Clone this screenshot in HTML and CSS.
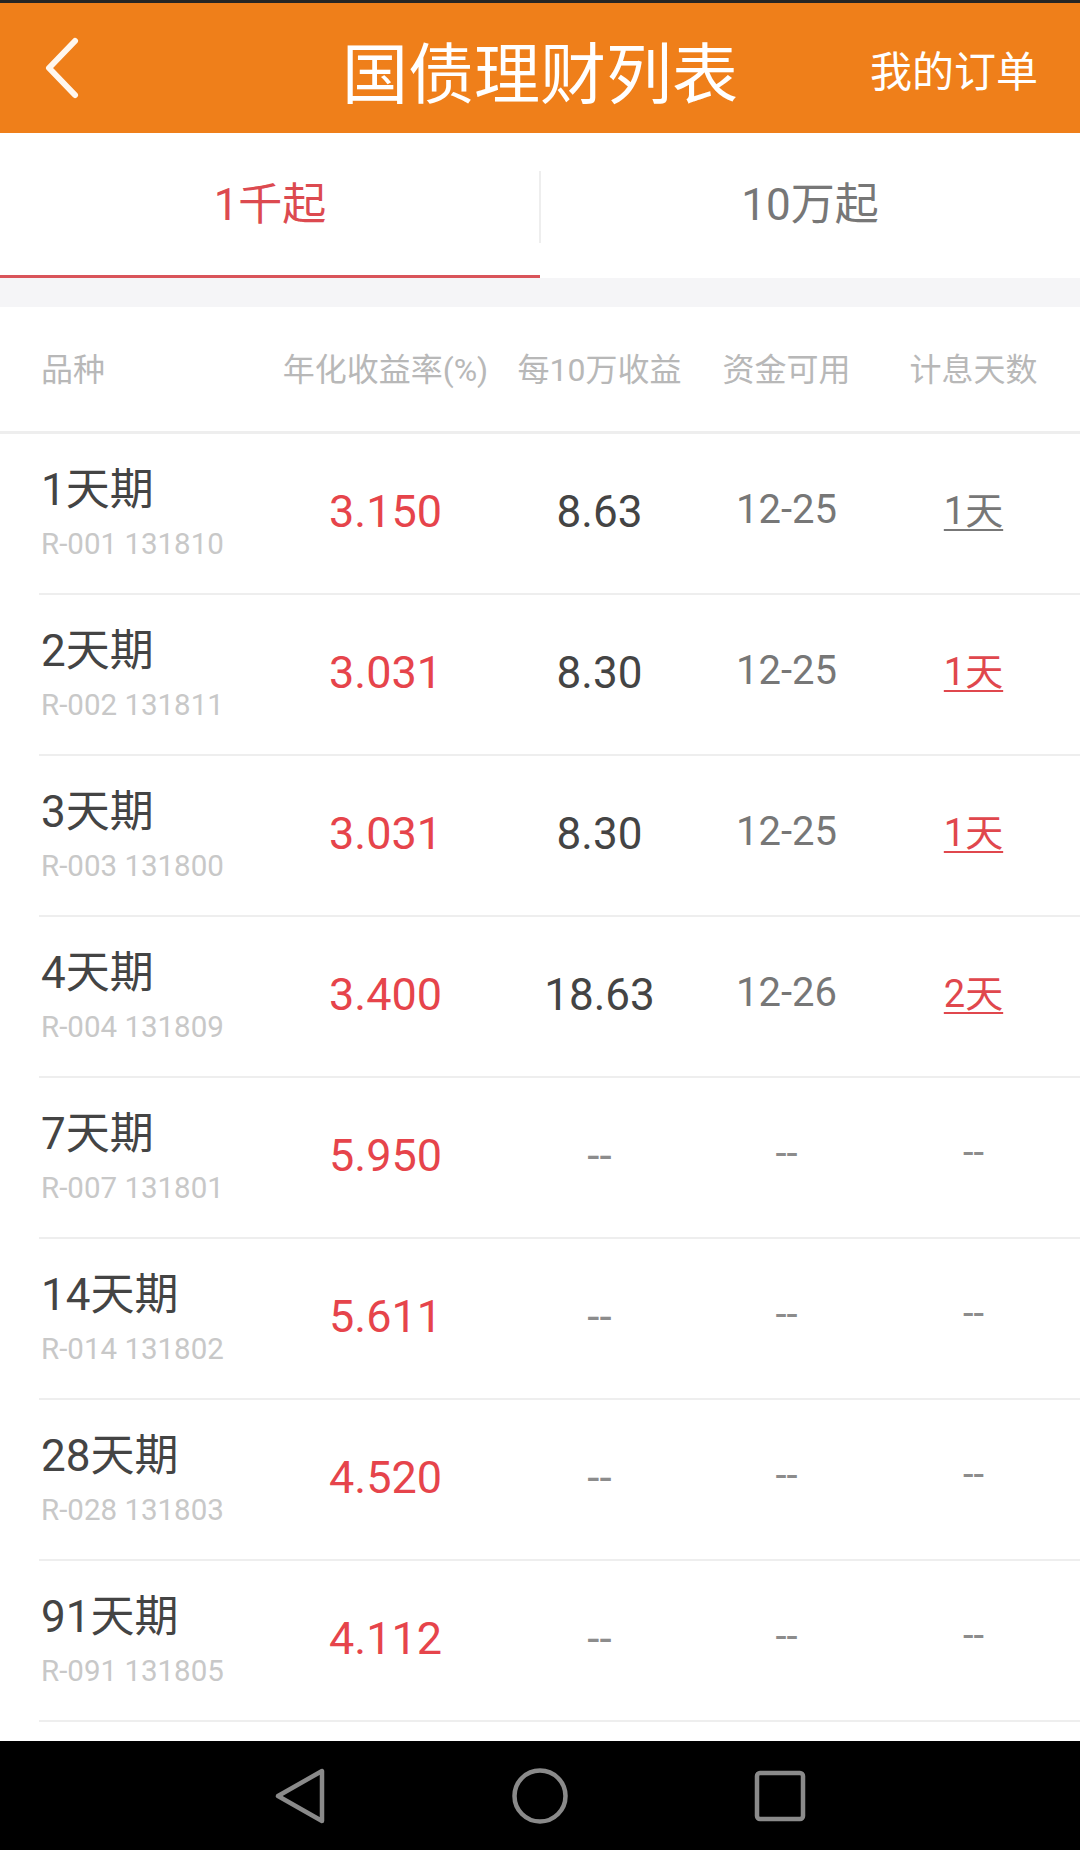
FILE: index.html
```html
<!DOCTYPE html>
<html>
<head>
  <meta charset="utf-8">
  <title>国债理财列表</title>
  <link rel="stylesheet" href="styles.css">
</head>
<body>
  <div class="screen">
    <div class="status-edge"></div>

    <div class="topbar">
      <div class="back">
        <svg width="40" height="64" viewBox="0 0 40 64">
          <polyline points="33,5 7,32 33,59" fill="none" stroke="#fff7ee" stroke-width="6" stroke-linecap="round" stroke-linejoin="round"/>
        </svg>
      </div>
      <div class="title">国债理财列表</div>
      <div class="orders">我的订单</div>
    </div>

    <div class="tabs">
      <div class="tab active">1千起</div>
      <div class="tab">10万起</div>
    </div>
    <div class="gap"></div>

    <div class="list">
      <div class="row head">
        <div class="cell name">品种</div>
        <div class="cell">年化收益率(%)</div>
        <div class="cell">每10万收益</div>
        <div class="cell">资金可用</div>
        <div class="cell">计息天数</div>
      </div>

      <div class="row">
        <div class="cell name"><div class="term">1天期</div><div class="code">R-001 131810</div></div>
        <div class="cell rate">3.150</div>
        <div class="cell income">8.63</div>
        <div class="cell date">12-25</div>
        <div class="cell days"><span class="link gray">1天</span></div>
      </div>
      <div class="row">
        <div class="cell name"><div class="term">2天期</div><div class="code">R-002 131811</div></div>
        <div class="cell rate">3.031</div>
        <div class="cell income">8.30</div>
        <div class="cell date">12-25</div>
        <div class="cell days"><span class="link">1天</span></div>
      </div>
      <div class="row">
        <div class="cell name"><div class="term">3天期</div><div class="code">R-003 131800</div></div>
        <div class="cell rate">3.031</div>
        <div class="cell income">8.30</div>
        <div class="cell date">12-25</div>
        <div class="cell days"><span class="link">1天</span></div>
      </div>
      <div class="row">
        <div class="cell name"><div class="term">4天期</div><div class="code">R-004 131809</div></div>
        <div class="cell rate">3.400</div>
        <div class="cell income">18.63</div>
        <div class="cell date">12-26</div>
        <div class="cell days"><span class="link">2天</span></div>
      </div>
      <div class="row">
        <div class="cell name"><div class="term">7天期</div><div class="code">R-007 131801</div></div>
        <div class="cell rate">5.950</div>
        <div class="cell income empty">--</div>
        <div class="cell date empty">--</div>
        <div class="cell days empty">--</div>
      </div>
      <div class="row">
        <div class="cell name"><div class="term">14天期</div><div class="code">R-014 131802</div></div>
        <div class="cell rate">5.611</div>
        <div class="cell income empty">--</div>
        <div class="cell date empty">--</div>
        <div class="cell days empty">--</div>
      </div>
      <div class="row">
        <div class="cell name"><div class="term">28天期</div><div class="code">R-028 131803</div></div>
        <div class="cell rate">4.520</div>
        <div class="cell income empty">--</div>
        <div class="cell date empty">--</div>
        <div class="cell days empty">--</div>
      </div>
      <div class="row">
        <div class="cell name"><div class="term">91天期</div><div class="code">R-091 131805</div></div>
        <div class="cell rate">4.112</div>
        <div class="cell income empty">--</div>
        <div class="cell date empty">--</div>
        <div class="cell days empty">--</div>
      </div>
    </div>

    <div class="navbar">
      <svg width="60" height="60" viewBox="0 0 60 60">
        <path d="M52,5 L52,55 L8,30 Z" fill="none" stroke="#8a8a8a" stroke-width="4.5" stroke-linejoin="round"/>
      </svg>
      <svg width="60" height="60" viewBox="0 0 60 60">
        <ellipse cx="30" cy="30" rx="25.5" ry="25.5" fill="none" stroke="#8a8a8a" stroke-width="4.5"/>
      </svg>
      <svg width="60" height="60" viewBox="0 0 60 60">
        <rect x="7" y="7" width="46" height="46" rx="3" fill="none" stroke="#8a8a8a" stroke-width="4.5"/>
      </svg>
    </div>
  </div>
</body>
</html>
```

FILE: styles.css
```css
body {
  margin: 0;
  font-family: Roboto, "Noto Sans CJK SC", sans-serif;
  background: #fff;
}
.screen {
  width: 1080px;
  height: 1850px;
  display: flex;
  flex-direction: column;
  overflow: hidden;
}
.status-edge {
  height: 3px;
  background: #252525;
}

/* 顶部栏 */
.topbar {
  height: 130px;
  background: #ef7f1a;
  display: grid;
  grid-template-columns: 1fr auto 1fr;
  align-items: center;
  color: #fff;
  font-family: "Noto Sans CJK SC", sans-serif;
}
.back {
  padding-left: 42px;
  display: flex;
  align-items: center;
}
.title {
  font-size: 66px;
  padding-top: 2px;
}
.orders {
  justify-self: end;
  font-size: 42px;
  padding-right: 42px;
}

/* 切换标签 */
.tabs {
  height: 145px;
  display: flex;
  align-items: stretch;
  position: relative;
}
.tab {
  flex: 1;
  display: flex;
  align-items: center;
  justify-content: center;
  font-size: 44px;
  color: #777;
  box-sizing: border-box;
  padding-bottom: 10px;
}
.tab.active {
  color: #dc4a50;
  border-bottom: 3px solid #d9545a;
  padding-bottom: 7px;
}
.tab + .tab::before {
  content: "";
  position: absolute;
  left: 539px;
  top: 38px;
  width: 2px;
  height: 72px;
  background: #eeeeee;
}
.gap {
  height: 29px;
  background: #f5f5f7;
}

/* 列表 */
.list {
  flex: 1;
}
.row {
  display: grid;
  grid-template-columns: 224px 241px 187px 187px 187px;
  align-items: center;
  height: 159px;
  margin-left: 39px;
  padding-left: 2px;
  border-bottom: 2px solid #eeeeee;
}
.row.head {
  height: 120px;
  padding-bottom: 4px;
  margin-left: 0;
  padding-left: 41px;
  border-bottom-width: 3px;
  font-size: 32px;
  color: #b8b8b8;
  white-space: nowrap;
}
.cell {
  text-align: center;
}
.cell.name {
  text-align: left;
}
.row .cell.name .term {
  font-size: 44px;
  line-height: 54px;
  color: #444;
  padding-top: 7px;
}
.code {
  font-size: 29.5px;
  line-height: 54px;
  color: #c8c8c8;
}
.rate {
  font-size: 45px;
  color: #e6444b;
  padding-bottom: 4px;
}
.income {
  font-size: 44px;
  color: #444;
  padding-bottom: 4px;
}
.date {
  font-size: 40px;
  color: #777;
  padding-bottom: 8px;
}
.days {
  font-size: 38px;
  padding-bottom: 12px;
}
.link {
  color: #e0474d;
  text-decoration: underline;
  text-decoration-thickness: 2px;
  text-underline-offset: 5px;
}
.link.gray {
  color: #777;
}
.empty {
  color: #8c8c8c;
}

/* 系统导航栏 */
.navbar {
  height: 109px;
  background: #000;
  display: flex;
  align-items: center;
  justify-content: center;
  gap: 180px;
}
```
